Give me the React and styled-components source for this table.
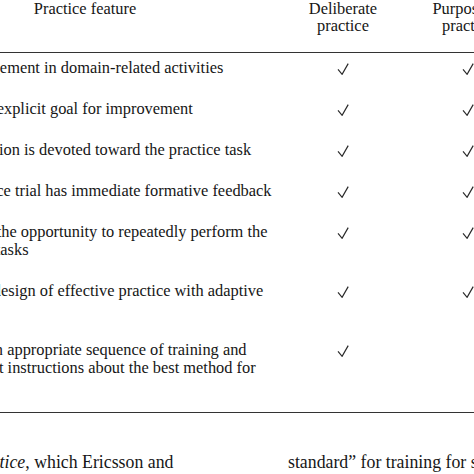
import React from 'react'
import styled, { createGlobalStyle } from 'styled-components'

const GlobalStyle = createGlobalStyle`
  html, body {
    margin: 0;
    padding: 0;
    background: #fff;
    overflow: hidden;
  }
  body {
    font-family: "Liberation Serif", "Times New Roman", serif;
    color: #161616;
  }
`

const Page = styled.div`
  width: 474px;
  height: 474px;
  overflow: hidden;
`

// the crop cuts into the table on the left, so the sheet starts off-screen
const Sheet = styled.div`
  width: 575px;
  margin-left: -42px;
`

const Table = styled.div`
  border-bottom: 1.5px solid #333;
`

const HeaderRow = styled.div`
  display: grid;
  grid-template-columns: 325px 120px 130px;
  padding-bottom: 17.5px;
  border-bottom: 1.5px solid #333;
  font-size: 16.4px;
  line-height: 17px;
`

const HeadCell = styled.div`
  text-align: center;
  padding-right: ${p => (p.$label ? '71px' : '0')};
`

const Row = styled.div`
  display: grid;
  grid-template-columns: 325px 120px 130px;
  padding: 6px 0 17px;
  font-size: 16.4px;
  line-height: 18px;
`

const Label = styled.div`
  text-align: left;
`

const MarkCell = styled.div`
  display: flex;
  justify-content: center;
  padding-top: 4px;
`

const Check = () => (
  <svg width="12" height="12" viewBox="0 0 12 12" fill="none">
    <path d="M1 6.4 L5.1 11.3 L11.2 0.6" stroke="#2a2a2a" strokeWidth="1.2" strokeLinejoin="miter" />
  </svg>
)

const Body = styled.div`
  display: grid;
  grid-template-columns: 330px 1fr;
  margin-top: 38px;
  font-size: 17.8px;
  line-height: 22px;
  white-space: nowrap;
`

const BodyCol = styled.div`
  padding-left: ${p => p.$pad || '0'};
  overflow: hidden;
`

const rows = [
  { text: 'Engagement in domain-related activities', d: true, p: true },
  { text: 'Have explicit goal for improvement', d: true, p: true },
  { text: 'Attention is devoted toward the practice task', d: true, p: true },
  { text: 'Practice trial has immediate formative feedback', d: true, p: true },
  { text: 'Have the opportunity to repeatedly perform the same tasks', d: true, p: true },
  { text: 'Task design of effective practice with adaptive levels', d: true, p: true },
  { text: 'Has an appropriate sequence of training and correct instructions about the best method for skills', d: true, p: false },
]

export default function App() {
  return (
    <Page>
      <GlobalStyle />
      <Sheet>
        <Table>
          <HeaderRow>
            <HeadCell $label>Practice feature</HeadCell>
            <HeadCell>Deliberate<br />practice</HeadCell>
            <HeadCell>Purposeful<br />practice</HeadCell>
          </HeaderRow>
          {rows.map((r, i) => (
            <Row key={i}>
              <Label>{r.text}</Label>
              <MarkCell>{r.d && <Check />}</MarkCell>
              <MarkCell>{r.p && <Check />}</MarkCell>
            </Row>
          ))}
        </Table>
        <Body>
          <BodyCol $pad="9px"><em>practice</em>, which Ericsson and</BodyCol>
          <BodyCol>standard” for training for skilled</BodyCol>
        </Body>
      </Sheet>
    </Page>
  )
}
